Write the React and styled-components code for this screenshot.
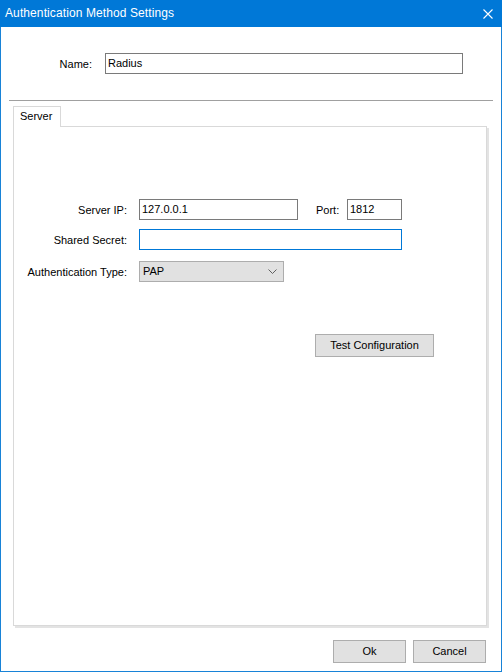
import styled, { createGlobalStyle } from "styled-components";

const GlobalStyle = createGlobalStyle`
  html, body {
    margin: 0;
    padding: 0;
    background: #ffffff;
  }
  body {
    font-family: "Liberation Sans", Arial, sans-serif;
    font-size: 11px;
    color: #000;
  }
`;

export default function App() {
  return (
    <>
      <GlobalStyle />
      <Window>
        <TitleBar>
          <Title>Authentication Method Settings</Title>
          <CloseButton aria-label="Close">
            <svg width="10" height="10" viewBox="0 0 10 10">
              <path d="M0.5 0.5 L9.5 9.5 M9.5 0.5 L0.5 9.5" stroke="#fff" strokeWidth="1.1" />
            </svg>
          </CloseButton>
        </TitleBar>
        <Body>
          <NameRow>
            <NameLabel>Name:</NameLabel>
            <TextBox $width={358} defaultValue="Radius" />
          </NameRow>
          <Separator />
          <TabStrip>
            <Tab>Server</Tab>
          </TabStrip>
          <TabPane>
            <FormRow>
              <FieldLabel>Server IP:</FieldLabel>
              <TextBox $width={159} defaultValue="127.0.0.1" />
              <PortLabel>Port:</PortLabel>
              <TextBox $width={55} defaultValue="1812" />
            </FormRow>
            <FormRow $gap={9}>
              <FieldLabel>Shared Secret:</FieldLabel>
              <TextBox $width={263} $focused />
            </FormRow>
            <FormRow $gap={11}>
              <FieldLabel>Authentication Type:</FieldLabel>
              <ComboBox>
                <span>PAP</span>
                <svg width="9" height="5" viewBox="0 0 9 5">
                  <path d="M0.5 0.5 L4.5 4.5 L8.5 0.5" fill="none" stroke="#606060" strokeWidth="1" />
                </svg>
              </ComboBox>
            </FormRow>
            <TestRow>
              <Button $width={119}>Test Configuration</Button>
            </TestRow>
          </TabPane>
          <Footer>
            <Button $width={73}>Ok</Button>
            <Button $width={73}>Cancel</Button>
          </Footer>
        </Body>
      </Window>
    </>
  );
}

const Window = styled.div`
  width: 502px;
  height: 672px;
  box-sizing: border-box;
  display: flex;
  flex-direction: column;
  border: 1px solid #1883d7;
  border-top: none;
  background: #ffffff;
`;

const TitleBar = styled.div`
  height: 26px;
  margin: 0 -1px;
  background: #0078d7;
  display: flex;
  align-items: center;
  justify-content: space-between;
  padding: 0 9px 1px 5px;
  color: #fff;
`;

const Title = styled.span`
  font-size: 12px;
  letter-spacing: 0.1px;
`;

const CloseButton = styled.div`
  display: flex;
  align-items: center;
  padding-top: 1px;
`;

const Body = styled.div`
  flex: 1;
  display: flex;
  flex-direction: column;
  padding: 26px 0 0 0;
`;

const NameRow = styled.div`
  display: flex;
  align-items: center;
`;

const NameLabel = styled.label`
  width: 91px;
  margin-right: 13px;
  text-align: right;
`;

const TextBox = styled.input`
  width: ${(p) => p.$width}px;
  height: 21px;
  box-sizing: border-box;
  border: 1px solid ${(p) => (p.$focused ? "#0078d7" : "#7a7a7a")};
  padding: 0 2px 1px;
  margin: 0;
  font: inherit;
  color: #000;
  outline: none;
  background: #fff;
`;

const Separator = styled.div`
  height: 1px;
  background: #a0a0a0;
  margin: 26px 8px 0;
`;

const TabStrip = styled.div`
  display: flex;
  margin: 5px 0 0 12px;
`;

const Tab = styled.div`
  position: relative;
  z-index: 1;
  width: 48px;
  height: 21px;
  box-sizing: border-box;
  margin-bottom: -1px;
  border: 1px solid #d9d9d9;
  border-bottom: none;
  background: #fff;
  padding: 3px 0 0 6px;
`;

const TabPane = styled.div`
  width: 474px;
  height: 500px;
  box-sizing: border-box;
  margin-left: 12px;
  border: 1px solid #d9d9d9;
  box-shadow: 2px 2px 0 #e3e3e3;
  padding-top: 72px;
  display: flex;
  flex-direction: column;
`;

const FormRow = styled.div`
  display: flex;
  align-items: center;
  margin-top: ${(p) => p.$gap || 0}px;
`;

const FieldLabel = styled.label`
  width: 113px;
  margin-right: 12px;
  text-align: right;
  white-space: nowrap;
`;

const PortLabel = styled.label`
  margin: 0 6px 0 18px;
  width: 25px;
`;

const ComboBox = styled.div`
  width: 145px;
  height: 21px;
  box-sizing: border-box;
  border: 1px solid #adadad;
  background: #e1e1e1;
  display: flex;
  align-items: center;
  justify-content: space-between;
  padding: 0 6px 1px 3px;
`;

const TestRow = styled.div`
  display: flex;
  margin: 52px 0 0 301px;
`;

const Button = styled.div`
  width: ${(p) => p.$width}px;
  height: 23px;
  box-sizing: border-box;
  border: 1px solid #adadad;
  background: #e1e1e1;
  display: flex;
  align-items: center;
  justify-content: center;
  padding-bottom: 1px;
`;

const Footer = styled.div`
  display: flex;
  justify-content: flex-end;
  gap: 7px;
  margin: 14px 15px 0 0;
`;
